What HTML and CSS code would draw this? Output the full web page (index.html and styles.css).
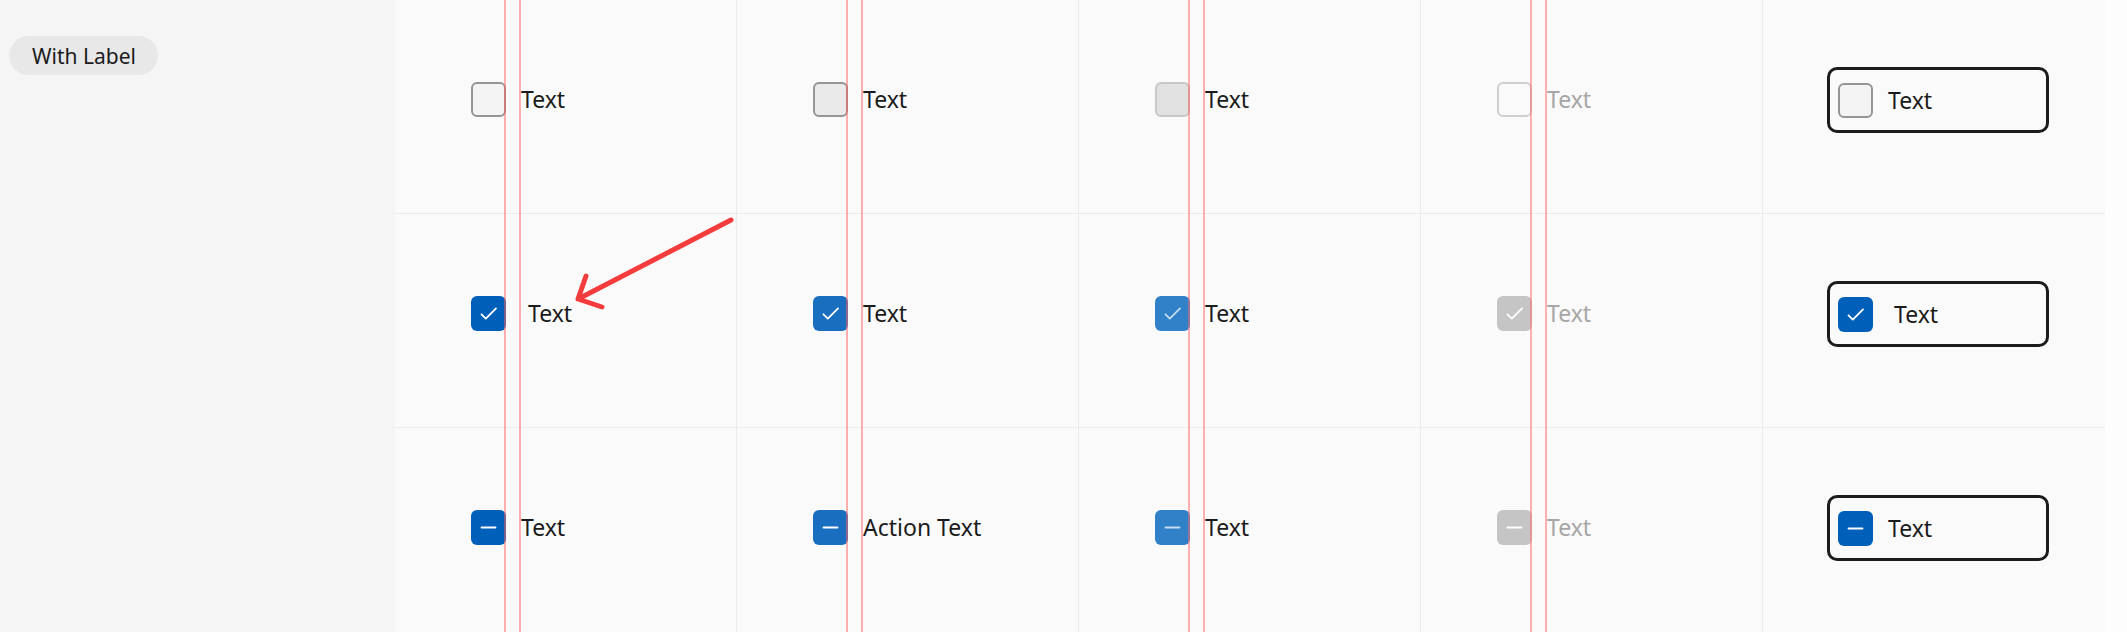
FILE: index.html
```html
<!DOCTYPE html>
<html lang="en">
<head>
<meta charset="utf-8">
<title>Checkbox – With Label</title>
<link rel="stylesheet" href="styles.css">
</head>
<body>
<div class="page">
  <aside class="side">
    <span class="pill">With Label</span>
  </aside>

  <main class="grid">
    <!-- Row 1: unchecked -->
    <div class="cell">
      <div class="item"><span class="cb cb-rest"></span><span class="label">Text</span></div>
    </div>
    <div class="cell">
      <div class="item"><span class="cb cb-hover"></span><span class="label">Text</span></div>
    </div>
    <div class="cell">
      <div class="item"><span class="cb cb-pressed"></span><span class="label">Text</span></div>
    </div>
    <div class="cell">
      <div class="item"><span class="cb cb-disabled"></span><span class="label label-disabled">Text</span></div>
    </div>
    <div class="cell cell-focus">
      <div class="focus"><span class="cb cb-rest"></span><span class="label">Text</span></div>
    </div>

    <!-- Row 2: checked -->
    <div class="cell">
      <div class="item item-wide"><span class="cb on-rest"><svg class="glyph" viewBox="0 0 35 35"><path d="M10.5 18.3 L14.8 22.6 L25 12.4"/></svg></span><span class="label">Text</span></div>
    </div>
    <div class="cell">
      <div class="item"><span class="cb on-hover"><svg class="glyph" viewBox="0 0 35 35"><path d="M10.5 18.3 L14.8 22.6 L25 12.4"/></svg></span><span class="label">Text</span></div>
    </div>
    <div class="cell">
      <div class="item"><span class="cb on-pressed"><svg class="glyph glyph-dim" viewBox="0 0 35 35"><path d="M10.5 18.3 L14.8 22.6 L25 12.4"/></svg></span><span class="label">Text</span></div>
    </div>
    <div class="cell">
      <div class="item"><span class="cb on-disabled"><svg class="glyph" viewBox="0 0 35 35"><path d="M10.5 18.3 L14.8 22.6 L25 12.4"/></svg></span><span class="label label-disabled">Text</span></div>
    </div>
    <div class="cell cell-focus">
      <div class="focus focus-wide"><span class="cb on-rest"><svg class="glyph" viewBox="0 0 35 35"><path d="M10.5 18.3 L14.8 22.6 L25 12.4"/></svg></span><span class="label">Text</span></div>
    </div>

    <!-- Row 3: indeterminate -->
    <div class="cell">
      <div class="item"><span class="cb on-rest"><svg class="glyph" viewBox="0 0 35 35"><path d="M10.5 17.5 L24.5 17.5"/></svg></span><span class="label">Text</span></div>
    </div>
    <div class="cell">
      <div class="item"><span class="cb on-hover"><svg class="glyph" viewBox="0 0 35 35"><path d="M10.5 17.5 L24.5 17.5"/></svg></span><span class="label">Action Text</span></div>
    </div>
    <div class="cell">
      <div class="item"><span class="cb on-pressed"><svg class="glyph glyph-dim" viewBox="0 0 35 35"><path d="M10.5 17.5 L24.5 17.5"/></svg></span><span class="label">Text</span></div>
    </div>
    <div class="cell">
      <div class="item"><span class="cb on-disabled"><svg class="glyph" viewBox="0 0 35 35"><path d="M10.5 17.5 L24.5 17.5"/></svg></span><span class="label label-disabled">Text</span></div>
    </div>
    <div class="cell cell-focus">
      <div class="focus"><span class="cb on-rest"><svg class="glyph" viewBox="0 0 35 35"><path d="M10.5 17.5 L24.5 17.5"/></svg></span><span class="label">Text</span></div>
    </div>
  </main>

  <div class="edge"></div>

  <!-- red alignment guides (overlay) -->
  <div class="guides">
    <span class="guide g1"></span><span class="guide g2"></span>
    <span class="guide g3"></span><span class="guide g4"></span>
    <span class="guide g5"></span><span class="guide g6"></span>
    <span class="guide g7"></span><span class="guide g8"></span>
  </div>

  <!-- annotation arrow (overlay) -->
  <svg class="arrow" viewBox="0 0 2127 632" width="2127" height="632">
    <path d="M731 220 L580 298"/>
    <path d="M586 276 L578 299 L602 307"/>
  </svg>
</div>
</body>
</html>
```

FILE: styles.css
```css
* { box-sizing: border-box; }

html, body {
  margin: 0;
  padding: 0;
  background: #fdfdfd;
}

body {
  font-family: "Noto Sans", "Open Sans", "DejaVu Sans", sans-serif;
  color: #1b1b1b;
}

.page {
  position: relative;
  width: 2127px;
  height: 632px;
  overflow: hidden;
  display: flex;
}

.side {
  width: 395px;
  flex: none;
  background: #f5f5f5;
  padding: 36px 0 0 9px;
}

.pill {
  display: inline-flex;
  align-items: center;
  height: 39px;
  padding: 0 22px 0 23px;
  border-radius: 20px;
  background: #e8e8e8;
  font-size: 21px;
  color: #1b1b1b;
}

.grid {
  flex: none;
  width: 1710px;
  display: grid;
  grid-template-columns: repeat(5, 342px);
  grid-template-rows: 214px 214px 1fr;
  background: #fafafa;
}

.edge {
  flex: 1;
  background: #fdfdfd;
}

.cell {
  border-right: 1px solid #ebebeb;
  border-bottom: 1px solid #ebebeb;
  padding: 82px 0 0 76px;
  display: flex;
  align-items: flex-start;
}

.cell:nth-child(5n) { border-right: none; }
.cell:nth-child(n+11) { border-bottom: none; }

.cell-focus {
  padding: 67px 0 0 64px;
}

.item {
  display: flex;
  align-items: center;
  gap: 15px;
  height: 35px;
}

.item-wide { gap: 22px; }

.focus {
  width: 222px;
  height: 66px;
  border: 3px solid #1c1c1c;
  border-radius: 10px;
  padding: 0 8px;
  display: flex;
  align-items: center;
  gap: 15px;
}

.focus-wide { gap: 21px; }

.label {
  font-size: 23px;
  line-height: 35px;
  color: #1b1b1b;
  white-space: nowrap;
}

.label-disabled { color: #a6a6a6; }

/* checkbox box */
.cb {
  width: 35px;
  height: 35px;
  flex: none;
  border-radius: 6px;
  display: block;
  position: relative;
}

.cb-rest     { background: #f4f4f4; border: 2px solid #959595; }
.cb-hover    { background: #eaeaea; border: 2px solid #959595; }
.cb-pressed  { background: #e1e1e1; border: 2px solid #c8c8c8; }
.cb-disabled { background: transparent; border: 2px solid #cfcfcf; }

.on-rest     { background: #005fb8; }
.on-hover    { background: #1a6ec0; }
.on-pressed  { background: #3181c8; }
.on-disabled { background: #c5c5c5; }

.glyph {
  display: block;
  width: 35px;
  height: 35px;
  fill: none;
  stroke: #ffffff;
  stroke-width: 1.8;
  stroke-linecap: round;
  stroke-linejoin: round;
}

.glyph-dim { stroke: rgba(255, 255, 255, 0.72); }

/* overlays */
.guides {
  position: absolute;
  inset: 0;
  pointer-events: none;
}

.guide {
  position: absolute;
  top: 0;
  width: 2px;
  height: 632px;
  background: rgba(255, 100, 100, 0.5);
}

.g1 { left: 504px; }
.g2 { left: 519px; }
.g3 { left: 846px; }
.g4 { left: 861px; }
.g5 { left: 1188px; }
.g6 { left: 1203px; }
.g7 { left: 1530px; }
.g8 { left: 1545px; }

.arrow {
  position: absolute;
  left: 0;
  top: 0;
  pointer-events: none;
  fill: none;
  stroke: #f43c3c;
  stroke-width: 5;
  stroke-linecap: round;
  stroke-linejoin: round;
}
```
